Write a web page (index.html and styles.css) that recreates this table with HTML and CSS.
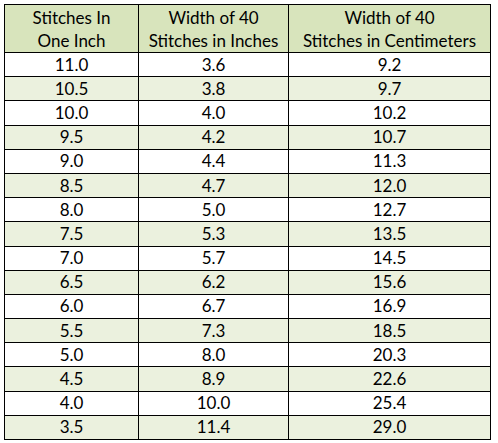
FILE: index.html
```html
<!DOCTYPE html>
<html>
<head>
<meta charset="utf-8">
<link rel="stylesheet" href="styles.css">
</head>
<body>
<table class="chart">
  <colgroup>
    <col class="c1"><col class="c2"><col class="c3">
  </colgroup>
  <thead>
    <tr class="head">
      <th>Stitches In<br>One Inch</th>
      <th>Width of 40<br>Stitches in Inches</th>
      <th>Width of 40<br>Stitches in Centimeters</th>
    </tr>
  </thead>
  <tbody>
    <tr><td>11.0</td><td>3.6</td><td>9.2</td></tr>
    <tr><td>10.5</td><td>3.8</td><td>9.7</td></tr>
    <tr><td>10.0</td><td>4.0</td><td>10.2</td></tr>
    <tr><td>9.5</td><td>4.2</td><td>10.7</td></tr>
    <tr><td>9.0</td><td>4.4</td><td>11.3</td></tr>
    <tr><td>8.5</td><td>4.7</td><td>12.0</td></tr>
    <tr><td>8.0</td><td>5.0</td><td>12.7</td></tr>
    <tr><td>7.5</td><td>5.3</td><td>13.5</td></tr>
    <tr><td>7.0</td><td>5.7</td><td>14.5</td></tr>
    <tr><td>6.5</td><td>6.2</td><td>15.6</td></tr>
    <tr><td>6.0</td><td>6.7</td><td>16.9</td></tr>
    <tr><td>5.5</td><td>7.3</td><td>18.5</td></tr>
    <tr><td>5.0</td><td>8.0</td><td>20.3</td></tr>
    <tr><td>4.5</td><td>8.9</td><td>22.6</td></tr>
    <tr><td>4.0</td><td>10.0</td><td>25.4</td></tr>
    <tr><td>3.5</td><td>11.4</td><td>29.0</td></tr>
  </tbody>
</table>
</body>
</html>
```
FILE: styles.css
```css
html, body {
  margin: 0;
  padding: 0;
  background: #ffffff;
}
body {
  padding: 4px 0 0 4px;
  font-family: "Lato", "Open Sans", sans-serif;
  color: #000;
}
.chart {
  border-collapse: collapse;
  table-layout: fixed;
  width: 486px;
  height: 436px;
  font-size: 17px;
}
.c1 { width: 134px; }
.c2 { width: 150px; }
.c3 { width: 202px; }
.chart th, .chart td {
  border: 1px solid #000;
  padding: 0;
  text-align: center;
  font-weight: normal;
  line-height: 20px;
}
.chart th {
  line-height: 23px;
}
.head {
  height: 48px;
  background: #d8e4bc;
}
.chart tbody tr {
  height: 24px;
}
.chart tbody tr:nth-child(even) {
  background: #ebf1de;
}
```
